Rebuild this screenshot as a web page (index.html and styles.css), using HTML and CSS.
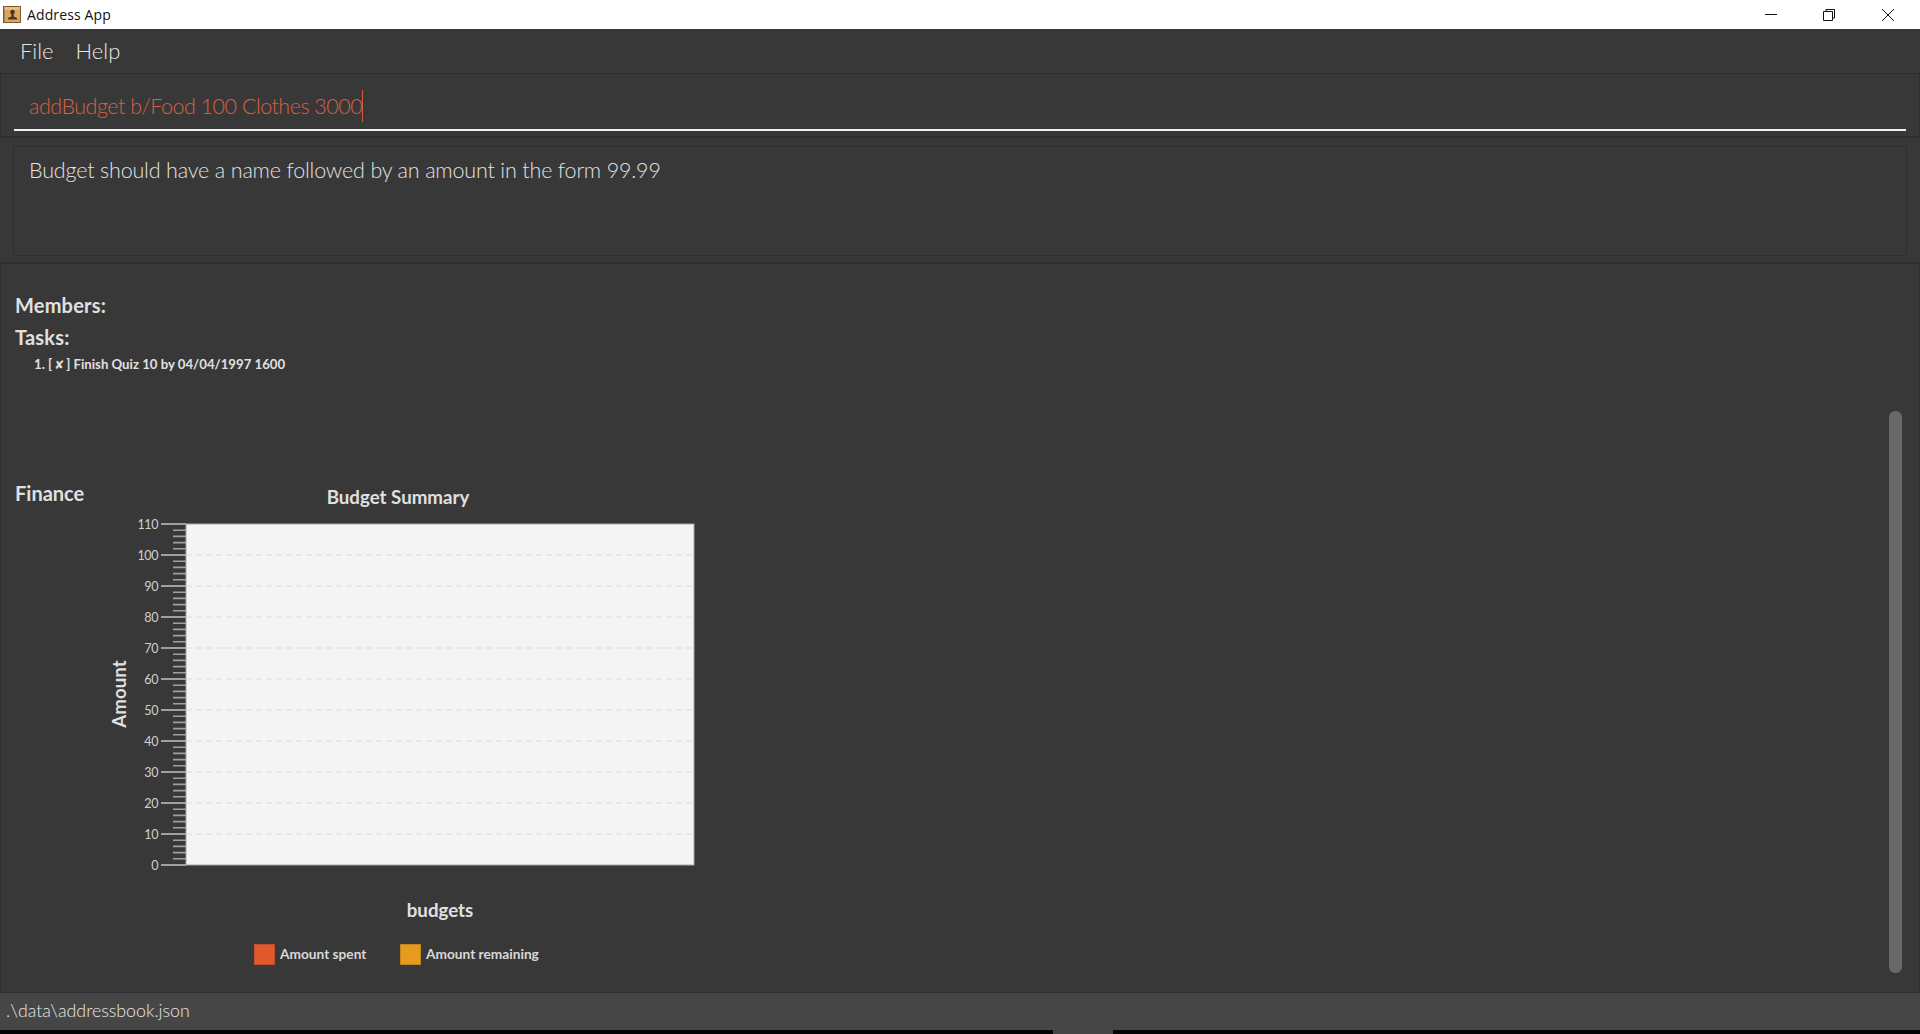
FILE: index.html
```html
<!DOCTYPE html>
<html lang="en">
<head>
<meta charset="utf-8">
<title>Address App</title>
<link rel="stylesheet" href="styles.css">
</head>
<body>
<div class="window">
  <header class="titlebar">
    <div class="title-left">
      <svg class="app-icon" width="18" height="17" viewBox="0 0 18 17">
        <rect x="0" y="0" width="18" height="17" fill="#7d5a34"/>
        <rect x="1.5" y="1" width="15.5" height="15" fill="#d9a85f"/>
        <rect x="1.5" y="1" width="15.5" height="3" fill="#e6bf80"/>
        <circle cx="9.5" cy="6" r="2.3" fill="#4a3520"/>
        <rect x="8.3" y="7" width="2.4" height="4" fill="#4a3520"/>
        <path d="M4.5 13.5 Q5 11 8 10.8 H11 Q14 11 14.5 13.5Z" fill="#4a3520"/>
      </svg>
      <span class="app-title">Address App</span>
    </div>
    <div class="win-controls">
      <svg class="win-btn" width="14" height="14" viewBox="0 0 14 14"><path d="M2 6.5H14" fill="none" stroke="#111" stroke-width="1"/></svg>
      <svg class="win-btn" width="14" height="14" viewBox="0 0 14 14"><path d="M1.5 3.5H10.5V12.5H1.5ZM4 3.5V1.5H12.5V10H10.5" fill="none" stroke="#111" stroke-width="1"/></svg>
      <svg class="win-btn" width="14" height="14" viewBox="0 0 14 14"><path d="M1 1L13 13M13 1L1 13" fill="none" stroke="#111" stroke-width="1"/></svg>
    </div>
  </header>

  <nav class="menubar">
    <span class="menu-item">File</span>
    <span class="menu-item">Help</span>
  </nav>

  <section class="command-pane">
    <div class="command-input"><span class="command-text">addBudget b/Food 100 Clothes 3000</span><span class="caret"></span></div>
  </section>

  <section class="result-pane">
    <div class="result-box">Budget should have a name followed by an amount in the form 99.99</div>
  </section>

  <main class="content">
    <h2 class="heading heading-members">Members:</h2>
    <h2 class="heading heading-tasks">Tasks:</h2>
    <p class="task">1. [<span class="task-mark">✘</span>] Finish Quiz 10 by 04/04/1997 1600</p>

    <div class="finance">
      <h2 class="heading finance-label">Finance</h2>
      <svg class="chart" width="660" height="500" viewBox="0 0 660 500">
        <g transform="translate(-90 -478)">
          <text class="chart-title" x="398" y="504" text-anchor="middle">Budget Summary</text>
          <rect class="plot" x="186" y="524" width="508" height="341"/>
          <path class="grid" d="M186 555H693M186 586H693M186 617H693M186 648H693M186 679H693M186 710H693M186 741H693M186 772H693M186 803H693M186 834H693"/>
          <line class="minor" x1="179.5" y1="524" x2="179.5" y2="865"/>
          <path class="major" d="M161 524H186M161 555H186M161 586H186M161 617H186M161 648H186M161 679H186M161 710H186M161 741H186M161 772H186M161 803H186M161 834H186M161 865H186"/>
          <g class="tick-labels" text-anchor="end">
            <text x="158" y="528.5">110</text><text x="158" y="559.5">100</text><text x="158" y="590.5">90</text>
            <text x="158" y="621.5">80</text><text x="158" y="652.5">70</text><text x="158" y="683.5">60</text>
            <text x="158" y="714.5">50</text><text x="158" y="745.5">40</text><text x="158" y="776.5">30</text>
            <text x="158" y="807.5">20</text><text x="158" y="838.5">10</text><text x="158" y="869.5">0</text>
          </g>
          <text class="axis-title" transform="translate(126 694) rotate(-90)" text-anchor="middle">Amount</text>
          <text class="axis-title" x="440" y="917" text-anchor="middle">budgets</text>
          <rect class="swatch-spent" x="254.5" y="944.5" width="20" height="20"/>
          <text class="legend-label" x="280" y="959">Amount spent</text>
          <rect class="swatch-left" x="400.5" y="944.5" width="20" height="20"/>
          <text class="legend-label" x="426" y="959">Amount remaining</text>
        </g>
      </svg>
    </div>
    <div class="scroll-thumb"></div>
  </main>

  <footer class="statusbar">.\data\addressbook.json</footer>
  <div class="taskbar-edge"><span class="taskbar-item"></span></div>
</div>
</body>
</html>
```

FILE: styles.css
```css
* { box-sizing: border-box; }
html, body { margin: 0; padding: 0; height: 100%; overflow: hidden; }
body { font-family: "Lato", "Open Sans", sans-serif; background: #383838; }

.window { display: flex; flex-direction: column; height: 1034px; width: 1920px; }

.titlebar {
  height: 29px; background: #fff; display: flex; align-items: center;
  justify-content: space-between; flex: none;
}
.title-left { display: flex; align-items: center; padding-left: 3px; gap: 6px; }
.app-icon { display: block; }
.app-title { font-family: "Open Sans", sans-serif; font-size: 14px; color: #111; letter-spacing: 0.12px; }
.win-controls { display: flex; gap: 45px; padding-right: 25px; }
.win-btn { display: block; }

.menubar {
  height: 44px; flex: none; background: #383838; display: flex; align-items: center;
  padding: 0 0 2px 20px; gap: 22px;
}
.menu-item { font-weight: 300; font-size: 22px; color: #e6e6e6; }

.command-pane {
  height: 65px; flex: none; border: 1px solid #2e2e2e; border-width: 1px 1px 2px 1px;
  padding: 0 13px;
}
.command-input {
  height: 57px; border-bottom: 2px solid #f2f2f2; display: flex; align-items: center;
  padding: 8px 0 0 15px;
}
.command-text { font-weight: 300; font-size: 21.5px; color: #d85f45; letter-spacing: -0.5px; }
.caret { width: 1px; height: 32px; background: #d2593f; }

.result-pane {
  height: 126px; flex: none; padding: 8px 13px; border-bottom: 2px solid #2e2e2e;
}
.result-box {
  height: 110px; border: 1px solid #2e2e2e; padding: 7px 15px;
  font-weight: 300; font-size: 21.5px; line-height: 32px; color: #e2e2e2; letter-spacing: -0.17px;
}

.content {
  position: relative; flex: 1; min-height: 0; padding: 28px 14px 0; border-left: 1px solid #2e2e2e; border-right: 1px solid #2e2e2e;
  color: #e8e8e8;
}
.heading { margin: 0; font-weight: 700; font-size: 20px; line-height: 26px; color: #e0e0e0; letter-spacing: 0.2px; }
.heading-tasks { margin-top: 6px; }
.task {
  margin: 0; padding: 4px 0 0 19px; font-weight: 700; font-size: 13.2px; line-height: 20px; color: #e0e0e0;
}
.task-mark { font-family: "DejaVu Sans", sans-serif; font-size: 12px; padding: 0 2px; }

.finance { display: flex; margin-top: 109px; }
.finance-label { width: 75px; flex: none; margin-top: -4px; letter-spacing: 0; }
.chart { display: block; flex: none; margin-top: -6px; }

.chart-title { font-family: "Lato", sans-serif; font-weight: 700; font-size: 18.7px; fill: #e0e0e0; }
.plot { fill: #f4f4f4; stroke: #a8a8a8; stroke-width: 1; }
.grid { stroke: #dcdcdc; stroke-width: 1; stroke-dasharray: 6 4; fill: none; }
.minor { stroke: #a0a0a0; stroke-width: 13; stroke-dasharray: 1.6 4.6; stroke-dashoffset: 0.8; }
.major { stroke: #a0a0a0; stroke-width: 2; fill: none; }
.tick-labels { font-family: "Lato", sans-serif; font-size: 12.5px; fill: #d0d0d0; letter-spacing: -0.4px; }
.axis-title { font-family: "Lato", sans-serif; font-weight: 700; font-size: 18.7px; fill: #e0e0e0; }
.legend-label { font-family: "Lato", sans-serif; font-weight: 700; font-size: 13.7px; fill: #d8d8d8; }
.swatch-spent { fill: #e25a2c; stroke: #c0502c; }
.swatch-left { fill: #e69b1d; stroke: #c08520; }

.scroll-thumb {
  position: absolute; left: 1888px; top: 147px; width: 13px; height: 562px;
  background: #686868; border-radius: 6px;
}

.statusbar {
  height: 38px; flex: none; background: #464646; border-top: 1px solid #2e2e2e; padding-left: 6px;
  font-weight: 300; font-size: 17.8px; line-height: 35px; color: #e6e6e6;
}
.taskbar-edge { height: 4px; flex: none; background: #050505; display: flex; padding-left: 1053px; }
.taskbar-item { display: block; width: 60px; height: 4px; background: #464646; }
```
